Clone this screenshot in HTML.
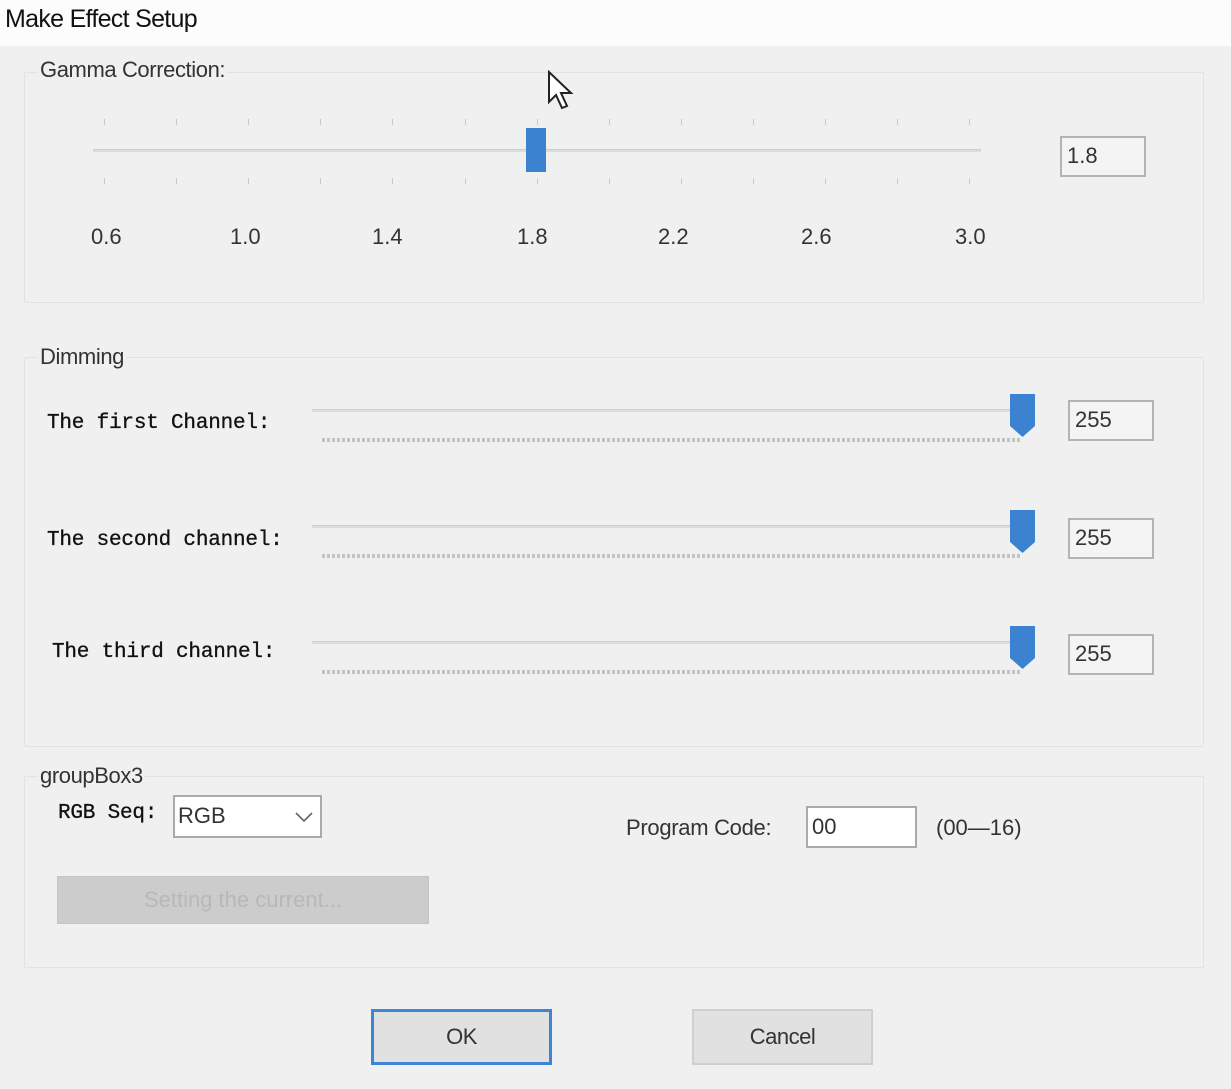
<!DOCTYPE html>
<html><head><meta charset="utf-8">
<style>
*{margin:0;padding:0;box-sizing:border-box}
body{width:1231px;height:1089px;background:#f0f0f0;position:relative;overflow:hidden;font-family:"Liberation Sans",sans-serif;color:#222}
.a{position:absolute}
.title{left:0;top:0;width:1231px;height:46px;background:#fcfcfc;}
.title span{position:absolute;left:5px;top:5px;font-size:25px;color:#111;letter-spacing:-0.7px}
.gb{border:1px solid #e2e2e2;border-radius:2px}
.lbl{font-size:22px;color:#333;background:#f0f0f0;padding:0 2px;letter-spacing:-0.4px}
.mono{font-family:"Liberation Mono",monospace;font-size:21px;color:#111;letter-spacing:-0.2px;-webkit-text-stroke:0.3px #111}
.tb{border:2px solid #b4b4b4;background:#f4f4f4;font-size:22px;padding-left:5px;line-height:36px;color:#333}
.track{height:3px;background:#dcdcdc;border-top:1px solid #d0d0d0}
.tick{width:1px;height:6px;background:#c8c8c8}
.dots{height:4px;background:repeating-linear-gradient(90deg,#c4c4c4 0 3px,transparent 3px 5px)}
.num{font-size:22px;color:#333;font-family:"Liberation Sans",sans-serif}
.btn{background:#e1e1e1;border:2px solid #cfcfcf;font-size:22px;text-align:center;color:#333;letter-spacing:-0.5px}
</style></head><body>
<div class="a title"><span>Make Effect Setup</span></div>

<div class="a gb" style="left:24px;top:72px;width:1180px;height:231px"></div>
<div class="a lbl" style="left:38px;top:57px">Gamma Correction:</div>
<div class="a track" style="left:93px;top:149px;width:888px"></div>
<div id="ticks"></div>
<div class="a" style="left:526px;top:128px;width:20px;height:44px;background:#3b82d0"></div>
<div class="a tb" style="left:1060px;top:136px;width:86px;height:41px">1.8</div>
<div class="a num" style="left:91px;top:224px">0.6</div>
<div class="a num" style="left:230px;top:224px">1.0</div>
<div class="a num" style="left:372px;top:224px">1.4</div>
<div class="a num" style="left:517px;top:224px">1.8</div>
<div class="a num" style="left:658px;top:224px">2.2</div>
<div class="a num" style="left:801px;top:224px">2.6</div>
<div class="a num" style="left:955px;top:224px">3.0</div>
<svg class="a" style="left:547px;top:70px" width="30" height="44" viewBox="0 0 30 44"><path d="M2 2 L2 32 L9 25 L15 38 L20 36 L14 23 L24 23 Z" fill="#fff" stroke="#222" stroke-width="2"/></svg>

<div class="a gb" style="left:24px;top:357px;width:1180px;height:390px"></div>
<div class="a lbl" style="left:38px;top:344px">Dimming</div>

<div class="a mono" style="left:47px;top:412px">The first Channel:</div>
<div class="a track" style="left:312px;top:409px;width:700px"></div>
<div class="a dots" style="left:322px;top:438px;width:700px"></div>
<svg class="a" style="left:1010px;top:394px" width="25" height="43"><path d="M0 0H25V32L12.5 43L0 32Z" fill="#3b82d0"/></svg>
<div class="a tb" style="left:1068px;top:400px;width:86px;height:41px">255</div>

<div class="a mono" style="left:47px;top:529px">The second channel:</div>
<div class="a track" style="left:312px;top:525px;width:700px"></div>
<div class="a dots" style="left:322px;top:554px;width:700px"></div>
<svg class="a" style="left:1010px;top:510px" width="25" height="43"><path d="M0 0H25V32L12.5 43L0 32Z" fill="#3b82d0"/></svg>
<div class="a tb" style="left:1068px;top:518px;width:86px;height:41px">255</div>

<div class="a mono" style="left:52px;top:641px">The third channel:</div>
<div class="a track" style="left:312px;top:641px;width:700px"></div>
<div class="a dots" style="left:322px;top:670px;width:700px"></div>
<svg class="a" style="left:1010px;top:626px" width="25" height="43"><path d="M0 0H25V32L12.5 43L0 32Z" fill="#3b82d0"/></svg>
<div class="a tb" style="left:1068px;top:634px;width:86px;height:41px">255</div>

<div class="a gb" style="left:24px;top:776px;width:1180px;height:192px"></div>
<div class="a lbl" style="left:38px;top:763px">groupBox3</div>
<div class="a mono" style="left:58px;top:802px">RGB Seq:</div>
<div class="a" style="left:173px;top:795px;width:149px;height:43px;background:#fff;border:2px solid #aaa;font-size:22px;line-height:38px;padding-left:3px;color:#333">RGB
<svg class="a" style="left:119px;top:13px" width="20" height="14"><path d="M2 3 L10 11 L18 3" fill="none" stroke="#666" stroke-width="1.6"/></svg></div>
<div class="a num" style="left:626px;top:815px;letter-spacing:-0.3px">Program Code:</div>
<div class="a" style="left:806px;top:806px;width:111px;height:42px;background:#fff;border:2px solid #aaa;font-size:22px;line-height:38px;padding-left:4px;color:#333">00</div>
<div class="a num" style="left:936px;top:815px">(00—16)</div>
<div class="a" style="left:57px;top:876px;width:372px;height:48px;background:#cccccc;border:1px solid #c4c4c4;font-size:22px;line-height:46px;text-align:center;color:#b8b8b8">Setting the current...</div>

<div class="a btn" style="left:371px;top:1009px;width:181px;height:56px;border:3px solid #3e86d4;line-height:50px">OK</div>
<div class="a btn" style="left:692px;top:1009px;width:181px;height:56px;line-height:52px">Cancel</div>

<script>
var h='';for(var i=0;i<13;i++){var x=104+i*72.1;h+='<div class="a tick" style="left:'+x+'px;top:119px"></div><div class="a tick" style="left:'+x+'px;top:178px"></div>';}
document.getElementById('ticks').innerHTML=h;
</script>
</body></html>
